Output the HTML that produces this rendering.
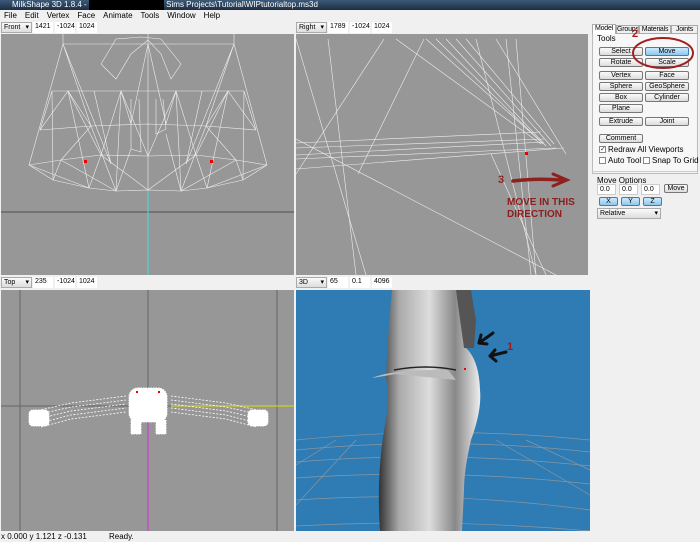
<!DOCTYPE html>
<html><head><meta charset="utf-8"><style>
*{margin:0;padding:0;box-sizing:border-box}
body{width:700px;height:542px;overflow:hidden;background:#f0f0f0;font-family:"Liberation Sans",sans-serif;font-size:8px;position:relative;color:#000}
.abs{position:absolute}
.title{left:0;top:0;width:700px;height:10px;background:linear-gradient(#3c5a78,#1d2e44);color:#fff;font-size:8px;line-height:10px;padding-left:12px}
.menu{left:0;top:10px;width:700px;height:11px;background:#f0f0f0;line-height:11px}
.menu span{margin:0 4px}
.tb{height:13px;background:#f0f0f0;line-height:12px}
.dd{position:absolute;top:1px;width:31px;height:11px;border:1px solid #aaa;background:linear-gradient(#fafafa,#ddd);padding-left:2px;line-height:9px;font-size:7px}
.dd:after{content:"▾";position:absolute;right:2px;top:0;font-size:7px}
.in{position:absolute;top:1px;height:11px;background:#fff;padding-left:2px;line-height:10px;font-size:7px}
.vp{background:#979797;overflow:hidden}
.btn{position:absolute;width:44px;height:9px;border:1px solid #777;border-radius:2px;background:linear-gradient(#fbfbfb,#dcdcdc);text-align:center;line-height:7px;font-size:7px}
.chk{position:absolute;width:7px;height:7px;border:1px solid #888;background:#fff}
.tab{position:absolute;top:4px;height:9px;border:1px solid #aaa;text-align:center;line-height:8px;font-size:7px;letter-spacing:-0.2px;overflow:hidden}
</style></head><body>
<div class="abs title">MilkShape 3D 1.8.4 - <span style="background:#000;display:inline-block;width:75px;height:10px;vertical-align:top"></span> Sims Projects\Tutorial\WIPtutorialtop.ms3d</div>
<div class="abs menu"><span>File</span><span>Edit</span><span>Vertex</span><span>Face</span><span>Animate</span><span>Tools</span><span>Window</span><span>Help</span></div>

<div class="abs tb" style="left:0;top:21px;width:294px"><div class="dd" style="left:1px">Front</div><div class="in" style="left:33px;width:20px">1421</div><div class="in" style="left:55px;width:20px">-1024</div><div class="in" style="left:77px;width:20px">1024</div></div>
<div class="abs tb" style="left:296px;top:21px;width:294px"><div class="dd" style="left:0">Right</div><div class="in" style="left:32px;width:20px">1789</div><div class="in" style="left:54px;width:20px">-1024</div><div class="in" style="left:76px;width:20px">1024</div></div>
<div class="abs tb" style="left:0;top:276px;width:294px"><div class="dd" style="left:1px">Top</div><div class="in" style="left:33px;width:20px">235</div><div class="in" style="left:55px;width:20px">-1024</div><div class="in" style="left:77px;width:20px">1024</div></div>
<div class="abs tb" style="left:296px;top:276px;width:294px"><div class="dd" style="left:0">3D</div><div class="in" style="left:32px;width:20px">65</div><div class="in" style="left:54px;width:20px">0.1</div><div class="in" style="left:76px;width:20px">4096</div></div>

<!-- front viewport -->
<div class="abs vp" style="left:1px;top:34px;width:293px;height:241px">
<svg width="293" height="241" stroke="#eee" stroke-width="0.6" fill="none">
<line x1="0" y1="178" x2="293" y2="178" stroke="#666" stroke-width="1.5"/>
<line x1="147" y1="155" x2="147" y2="241" stroke="#4dd" stroke-width="1"/>
<polyline points="62,0 62,10 233,10 233,0"/>
<polyline points="51,57 243,57"/>
<polyline points="39,96 90,92 147,90 205,92 255,96"/>
<polyline points="28,131 60,126 100,121 147,122 195,121 235,126 266,131"/>
<polyline points="28,131 52,146 88,154 115,157 147,156 180,157 206,154 242,146 266,131"/>
<polyline points="28,131 62,10"/><polyline points="266,131 233,10"/>
<polyline points="52,146 51,57 39,96"/><polyline points="242,146 243,57 255,96"/>
<polyline points="88,154 67,57 90,92 62,10 110,130 93,57"/>
<polyline points="206,154 227,57 205,92 233,10 185,130 201,57"/>
<polyline points="115,157 120,57 130,90 147,10 165,90 175,57 180,157"/>
<polyline points="147,0 147,156"/>
<polyline points="100,30 115,5 140,3 160,5 180,30 170,45 160,20 147,6 130,20 115,45 100,30"/>
<polyline points="130,65 130,115 140,118 138,65"/><polyline points="155,65 155,100 165,95 162,65"/>
<polyline points="39,96 67,57 100,121 120,57 147,122 175,57 195,121 227,57 255,96"/>
<polyline points="60,126 90,92 115,157"/><polyline points="235,126 205,92 180,157"/>
<polyline points="28,131 88,154 100,121 147,156 195,121 206,154 266,131"/>
<polyline points="52,146 60,126 115,157 130,115"/><polyline points="242,146 235,126 180,157 165,100"/>
</svg>
<div class="abs" style="left:83px;top:126px;width:3px;height:3px;background:#e00"></div>
<div class="abs" style="left:209px;top:126px;width:3px;height:3px;background:#e00"></div>
</div>

<!-- right viewport -->
<div class="abs vp" style="left:296px;top:34px;width:292px;height:241px">
<svg width="292" height="241" stroke="#eee" stroke-width="0.6" fill="none">
<line x1="0" y1="5" x2="70" y2="241"/><line x1="32" y1="5" x2="60" y2="241"/>
<line x1="88" y1="5" x2="0" y2="140"/><line x1="128" y1="5" x2="62" y2="140"/>
<line x1="0" y1="105" x2="260" y2="241"/><line x1="100" y1="5" x2="245" y2="110"/>
<line x1="130" y1="5" x2="242" y2="105"/><line x1="140" y1="5" x2="247" y2="110"/>
<line x1="150" y1="5" x2="250" y2="112"/><line x1="160" y1="5" x2="255" y2="112"/>
<line x1="170" y1="5" x2="258" y2="110"/><line x1="200" y1="5" x2="270" y2="120"/>
<line x1="210" y1="5" x2="235" y2="241"/><line x1="220" y1="5" x2="240" y2="241"/>
<line x1="180" y1="5" x2="240" y2="241"/><line x1="195" y1="120" x2="250" y2="241"/>
<line x1="0" y1="109" x2="245" y2="98"/><line x1="0" y1="114" x2="248" y2="105"/>
<line x1="0" y1="135" x2="268" y2="114"/><line x1="0" y1="125" x2="260" y2="114"/>
<line x1="0" y1="121" x2="248" y2="108"/>
</svg>
<div class="abs" style="left:229px;top:118px;width:3px;height:3px;background:#e00"></div>
<div class="abs" style="left:202px;top:140px;color:#8e1d1d;font-weight:bold;font-size:11px">3</div>
<svg class="abs" style="left:215px;top:138px" width="60" height="16"><path d="M2,9 Q25,6 50,8" stroke="#8e2020" stroke-width="3.5" fill="none" stroke-linecap="round"/><path d="M42,2 L56,8 L42,14" stroke="#8e2020" stroke-width="3" fill="none" stroke-linecap="round"/></svg>
<div class="abs" style="left:211px;top:163px;color:#8e1d1d;font-weight:bold;font-size:10px;line-height:12px;font-family:'Liberation Sans Narrow','Liberation Sans',sans-serif">MOVE IN THIS<br>DIRECTION</div>
</div>

<!-- top viewport -->
<div class="abs vp" style="left:1px;top:290px;width:293px;height:241px">
<svg width="293" height="241" fill="none">
<line x1="19" y1="0" x2="19" y2="241" stroke="#666"/><line x1="276" y1="0" x2="276" y2="241" stroke="#666"/>
<line x1="0" y1="116" x2="293" y2="116" stroke="#666"/>
<line x1="147" y1="0" x2="147" y2="116" stroke="#666"/>
<line x1="147" y1="116" x2="147" y2="241" stroke="#c050c0" stroke-width="1.5"/>
<line x1="170" y1="116" x2="293" y2="116" stroke="#dd0" stroke-width="1"/>
<g stroke="#fff" stroke-width="0.8" stroke-dasharray="2,1.5">
<path d="M30,122 L70,113 L125,106 M170,106 L225,113 L265,122"/>
<path d="M30,126 L70,117 L125,110 M170,110 L225,117 L265,126"/>
<path d="M32,130 L70,121 L125,114 M170,114 L225,121 L263,130"/>
<path d="M35,134 L70,125 L125,118 M170,118 L225,125 L260,134"/>
<path d="M40,137 L70,129 L125,122 M170,122 L225,129 L255,137"/>
</g>
<g fill="#fff" stroke="#fff" stroke-width="1" stroke-dasharray="1.5,1">
<rect x="128" y="98" width="38" height="34" rx="9"/>
<rect x="130" y="130" width="10" height="14"/><rect x="155" y="130" width="10" height="14"/>
<rect x="28" y="120" width="20" height="16" rx="4"/><rect x="247" y="120" width="20" height="16" rx="4"/>
</g>
<rect x="135" y="101" width="2" height="2" fill="#e00"/><rect x="157" y="101" width="2" height="2" fill="#e00"/>
</svg>
</div>

<!-- 3D viewport -->
<div class="abs" style="left:296px;top:290px;width:294px;height:241px;background:#2f7bb4;overflow:hidden">
<svg width="294" height="241">
<g stroke="#8a97a0" stroke-width="0.7" fill="none">
<path d="M0,150 Q147,135 294,150"/><path d="M0,160 Q147,146 294,162"/><path d="M0,172 Q147,160 294,176"/>
<path d="M0,188 Q147,178 294,194"/><path d="M0,210 Q147,200 294,220"/><path d="M0,236 Q147,228 294,241"/>
<line x1="0" y1="175" x2="40" y2="150"/><line x1="0" y1="215" x2="60" y2="150"/><line x1="200" y1="150" x2="294" y2="205"/><line x1="230" y1="150" x2="294" y2="180"/>
</g>
<defs><linearGradient id="g" x1="0" x2="1"><stop offset="0" stop-color="#333"/><stop offset="0.2" stop-color="#aaa"/><stop offset="0.5" stop-color="#ddd"/><stop offset="0.75" stop-color="#888"/><stop offset="1" stop-color="#eee"/></linearGradient></defs>
<path d="M96,0 L160,0 Q172,30 170,58 Q183,70 184,100 Q186,120 175,150 Q168,180 168,200 L166,241 L84,241 Q80,180 90,130 Q94,100 90,90 Q92,40 96,0 Z" fill="url(#g)"/>
<path d="M76,88 Q95,80 140,80 L152,80 L160,90 L100,84 Z" fill="#bbb"/>
<path d="M160,0 L175,0 L180,30 L178,58 L168,58 Z" fill="#555"/>
<path d="M98,80 Q130,74 160,80" stroke="#222" stroke-width="1.5" fill="none"/>
<path d="M197,43 L183,53 M183,53 L185,45 M183,53 L191,54" stroke="#111" stroke-width="3" fill="none" stroke-linecap="round"/>
<path d="M210,62 L194,66 M194,66 L199,60 M194,66 L200,71" stroke="#111" stroke-width="3" fill="none" stroke-linecap="round"/>
<rect x="168" y="78" width="2" height="2" fill="#e00"/>
<text x="211" y="60" fill="#a01818" font-size="11" font-weight="bold" font-family="Liberation Sans">1</text>
</svg>
</div>

<div class="abs" style="left:0;top:532px;width:700px;height:10px;line-height:10px;background:#f0f0f0">
<span class="abs" style="left:1px">x 0.000 y 1.121 z -0.131</span><span class="abs" style="left:109px">Ready.</span></div>

<!-- right panel -->
<div class="abs" style="left:590px;top:21px;width:110px;height:511px;background:#f0f0f0">
<div class="tab" style="left:2px;top:3px;width:24px;height:10px;border-bottom:none;background:#fff">Model</div>
<div class="tab" style="left:26px;width:23px">Groups</div>
<div class="tab" style="left:49px;width:32px">Materials</div>
<div class="tab" style="left:81px;width:27px">Joints</div>
<div class="abs" style="left:2px;top:13px;width:106px;height:140px;border:1px solid #bbb;border-top:none;background:#f7f7f7"></div>
<div class="abs" style="left:7px;top:13px">Tools</div>
<div class="btn" style="left:9px;top:26px">Select</div>
<div class="btn" style="left:55px;top:26px;background:linear-gradient(#cfeafb,#8cc8ee);border-color:#3c7fb1">Move</div>
<div class="btn" style="left:9px;top:37px">Rotate</div><div class="btn" style="left:55px;top:37px">Scale</div>
<div class="btn" style="left:9px;top:50px">Vertex</div><div class="btn" style="left:55px;top:50px">Face</div>
<div class="btn" style="left:9px;top:61px">Sphere</div><div class="btn" style="left:55px;top:61px">GeoSphere</div>
<div class="btn" style="left:9px;top:72px">Box</div><div class="btn" style="left:55px;top:72px">Cylinder</div>
<div class="btn" style="left:9px;top:83px">Plane</div>
<div class="btn" style="left:9px;top:96px">Extrude</div><div class="btn" style="left:55px;top:96px">Joint</div>
<div class="btn" style="left:9px;top:113px">Comment</div>
<div class="chk" style="left:9px;top:125px;font-size:7px;line-height:5px;color:#236">✓</div><div class="abs" style="left:18px;top:124px">Redraw All Viewports</div>
<div class="chk" style="left:9px;top:136px"></div><div class="abs" style="left:18px;top:135px">Auto Tool</div>
<div class="chk" style="left:53px;top:136px"></div><div class="abs" style="left:62px;top:135px">Snap To Grid</div>
<div class="abs" style="left:2px;top:150px;width:106px;height:1px;background:#ccc"></div>
<div class="abs" style="left:7px;top:155px">Move Options</div>
<div class="in" style="left:7px;top:163px;width:19px;border:1px solid #ccc">0.0</div>
<div class="in" style="left:29px;top:163px;width:19px;border:1px solid #ccc">0.0</div>
<div class="in" style="left:51px;top:163px;width:19px;border:1px solid #ccc">0.0</div>
<div class="btn" style="left:74px;top:163px;width:24px">Move</div>
<div class="btn" style="left:9px;top:176px;width:19px;background:linear-gradient(#cfeafb,#8cc8ee);border-color:#3c7fb1">X</div>
<div class="btn" style="left:31px;top:176px;width:19px;background:linear-gradient(#cfeafb,#8cc8ee);border-color:#3c7fb1">Y</div>
<div class="btn" style="left:53px;top:176px;width:19px;background:linear-gradient(#cfeafb,#8cc8ee);border-color:#3c7fb1">Z</div>
<div class="dd" style="left:7px;top:187px;width:64px">Relative</div>
<div class="abs" style="left:42px;top:7px;color:#a01818;font-weight:bold;font-size:11px">2</div>
<svg class="abs" style="left:40px;top:12px" width="70" height="40"><ellipse cx="33" cy="20" rx="30" ry="15" fill="none" stroke="#a02020" stroke-width="2"/></svg>
</div>
</body></html>
